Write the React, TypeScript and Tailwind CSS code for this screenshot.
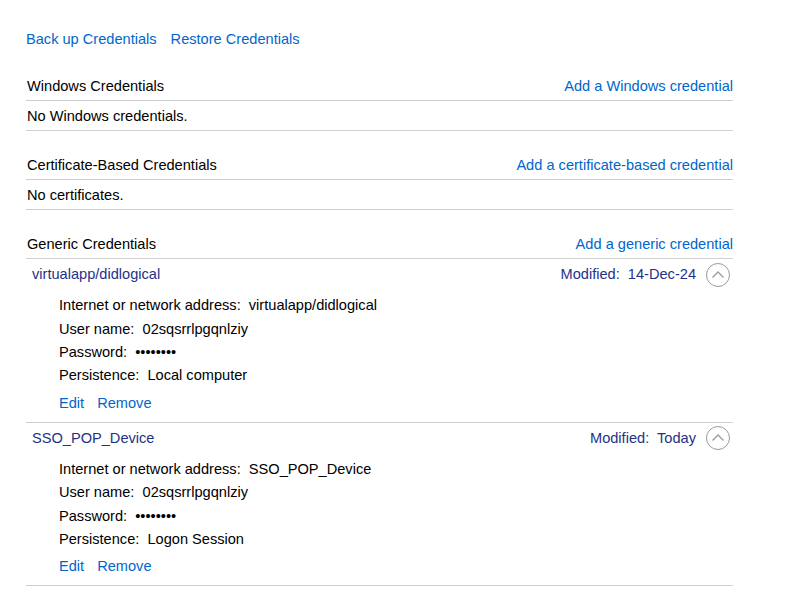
import React from "react";

const font = { fontFamily: '"Liberation Sans", Arial, sans-serif' };

type Cred = {
    name: string;
    modified: string;
    user: string;
    persistence: string;
};

const creds: Cred[] = [
    { name: "virtualapp/didlogical", modified: "14-Dec-24", user: "02sqsrrlpgqnlziy", persistence: "Local computer" },
    { name: "SSO_POP_Device", modified: "Today", user: "02sqsrrlpgqnlziy", persistence: "Logon Session" },
];

const Collapse = () => (
    <svg width="26" height="26" viewBox="0 0 26 26" className="shrink-0">
        <circle cx="13" cy="13" r="11.5" fill="none" stroke="#9a9a9a" strokeWidth="1" />
        <path d="M7.5 15.5 L13 10 L18.5 15.5" fill="none" stroke="#9a9a9a" strokeWidth="1.3" />
    </svg>
);

const SectionHeader = ({ title, action }: { title: string; action: string }) => (
    <div className="flex items-center justify-between h-[29px] pt-[1px] border-b border-[#cfcfcf]">
        <span className="text-black pl-[1px]">{title}</span>
        <a className="text-[#0066cc] cursor-pointer">{action}</a>
    </div>
);

const EmptyRow = ({ text }: { text: string }) => (
    <div className="flex items-center h-[30px] pt-[2px] pl-[1px] border-b border-[#cfcfcf] text-black">{text}</div>
);

const CredItem = ({ cred }: { cred: Cred }) => (
    <div className="border-b border-[#cfcfcf] pb-[3px]">
        <div className="flex items-center justify-between h-[30px] pt-[1px] pl-[6px]">
            <span className="text-[#1e3287]">{cred.name}</span>
            <div className="flex items-center gap-[9px] mr-[2px]">
                <span className="text-[#1e3287] whitespace-pre">Modified:  {cred.modified}</span>
                <Collapse />
            </div>
        </div>
        <div className="pl-[33px] pt-[5px] flex flex-col text-black">
            <div className="h-[23.4px] flex items-center whitespace-pre">Internet or network address:  {cred.name}</div>
            <div className="h-[23.4px] flex items-center whitespace-pre">User name:  {cred.user}</div>
            <div className="h-[23.4px] flex items-center whitespace-pre">Password:  ••••••••</div>
            <div className="h-[23.4px] flex items-center whitespace-pre">Persistence:  {cred.persistence}</div>
            <div className="flex gap-[13px] h-[31px] items-center text-[#0066cc]">
                <a className="cursor-pointer">Edit</a>
                <a className="cursor-pointer">Remove</a>
            </div>
        </div>
    </div>
);

export default function App() {
    return (
        <div className="w-[794px] h-[611px] bg-white overflow-hidden text-[14.6px] leading-[17px]" style={font}>
            <div className="ml-[26px] w-[707px] pt-[30px]">
                <div className="flex gap-[14px] text-[#0066cc] h-[18px] items-center">
                    <a className="cursor-pointer">Back up Credentials</a>
                    <a className="cursor-pointer">Restore Credentials</a>
                </div>
                <div className="mt-[24px]">
                    <SectionHeader title="Windows Credentials" action="Add a Windows credential" />
                    <EmptyRow text="No Windows credentials." />
                </div>
                <div className="mt-[20px]">
                    <SectionHeader title="Certificate-Based Credentials" action="Add a certificate-based credential" />
                    <EmptyRow text="No certificates." />
                </div>
                <div className="mt-[20px]">
                    <SectionHeader title="Generic Credentials" action="Add a generic credential" />
                    {creds.map((c) => (
                        <CredItem key={c.name} cred={c} />
                    ))}
                </div>
            </div>
        </div>
    );
}
